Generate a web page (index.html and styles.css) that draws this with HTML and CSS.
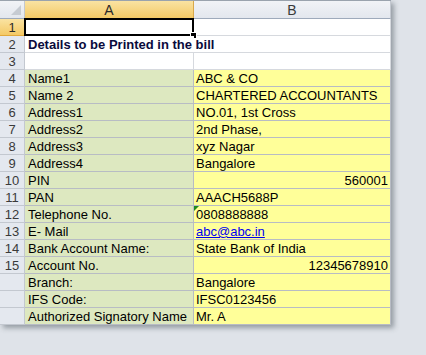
FILE: index.html
```html
<!DOCTYPE html>
<html lang="en">

<head>
    <meta charset="UTF-8">
    <meta name="viewport" content="width=device-width, initial-scale=1.0">
    <title>Bill Details</title>
    <link rel="stylesheet" href="styles.css">
</head>

<body>

    <div class="sheet">
        <!-- column headers -->
        <div class="corner"><span class="corner-mark"></span></div>
        <div class="col-head active">A</div>
        <div class="col-head">B</div>

        <div class="row-head active">1</div>
        <div class="cell blank selected"></div>
        <div class="cell blank"></div>

        <div class="row-head">2</div>
        <div class="cell blank title">Details to be Printed in the bill</div>
        <div class="cell blank spill"></div>

        <div class="row-head">3</div>
        <div class="cell blank"></div>
        <div class="cell blank"></div>

        <div class="row-head">4</div>
        <div class="cell label">Name1</div>
        <div class="cell value">ABC &amp; CO</div>

        <div class="row-head">5</div>
        <div class="cell label">Name 2</div>
        <div class="cell value">CHARTERED ACCOUNTANTS</div>

        <div class="row-head">6</div>
        <div class="cell label">Address1</div>
        <div class="cell value">NO.01, 1st Cross</div>

        <div class="row-head">7</div>
        <div class="cell label">Address2</div>
        <div class="cell value">2nd Phase,</div>

        <div class="row-head">8</div>
        <div class="cell label">Address3</div>
        <div class="cell value">xyz Nagar</div>

        <div class="row-head">9</div>
        <div class="cell label">Address4</div>
        <div class="cell value">Bangalore</div>

        <div class="row-head">10</div>
        <div class="cell label">PIN</div>
        <div class="cell value num">560001</div>

        <div class="row-head">11</div>
        <div class="cell label">PAN</div>
        <div class="cell value">AAACH5688P</div>

        <div class="row-head">12</div>
        <div class="cell label">Telephone No.</div>
        <div class="cell value flagged">0808888888</div>

        <div class="row-head">13</div>
        <div class="cell label">E- Mail</div>
        <div class="cell value"><a class="link" href="#">abc@abc.in</a></div>

        <div class="row-head">14</div>
        <div class="cell label">Bank Account Name:</div>
        <div class="cell value">State Bank of India</div>

        <div class="row-head">15</div>
        <div class="cell label">Account No.</div>
        <div class="cell value num">12345678910</div>

        <div class="row-head"></div>
        <div class="cell label">Branch:</div>
        <div class="cell value">Bangalore</div>

        <div class="row-head"></div>
        <div class="cell label">IFS Code:</div>
        <div class="cell value">IFSC0123456</div>

        <div class="row-head"></div>
        <div class="cell label">Authorized Signatory Name</div>
        <div class="cell value">Mr. A</div>
    </div>

</body>

</html>
```

FILE: styles.css
```css
body {
    margin: 0;
    background-color: #dfe3e9;
    font-family: "Liberation Sans", Arial, sans-serif;
    font-size: 13px;
    height: 355px;
    overflow: hidden;
}

.sheet {
    display: grid;
    grid-template-columns: 25px 169px 197px;
    grid-template-rows: 18px;
    grid-auto-rows: 17px;
    width: 391px;
    background-color: #fff;
    box-shadow: 3px 3px 5px rgba(60, 70, 80, 0.45);
    border-top: 1px solid #9aa3ad;
    box-sizing: border-box;
}

/* header strip */
.corner,
.col-head,
.row-head {
    background: linear-gradient(#f1f3f6, #e3e7ee);
    color: #3a3a3a;
    box-sizing: border-box;
    border-right: 1px solid #c3c8d0;
    border-bottom: 1px solid #c3c8d0;
    display: flex;
    align-items: center;
    justify-content: center;
}

.corner {
    position: relative;
    border-bottom-color: #9eaabb;
}

.corner-mark {
    position: absolute;
    right: 3px;
    bottom: 3px;
    width: 0;
    height: 0;
    border-left: 10px solid transparent;
    border-bottom: 10px solid #c6cbd2;
}

.col-head {
    font-size: 14px;
    border-bottom-color: #9eaabb;
}

.row-head {
    background: #e4e8ef;
    font-size: 13px;
    padding-top: 1px;
}

.col-head.active,
.row-head.active {
    background: linear-gradient(#fae3a2, #f4c965);
    border-right-color: #d8a84a;
    border-bottom-color: #e2a93b;
    color: #2a2a2a;
}

/* data cells */
.cell {
    box-sizing: border-box;
    border-right: 1px solid #c6cbd2;
    border-bottom: 1px solid #c6cbd2;
    padding: 1px 2px 0 3px;
    white-space: nowrap;
    line-height: 15px;
    color: #000;
}

.blank {
    background-color: #fff;
    border-bottom-color: #d6d9de;
    border-right-color: #d6d9de;
}

.title {
    font-weight: bold;
    color: #0a0a3c;
    overflow: visible;
    border-right: none;
    position: relative;
    z-index: 1;
}

/* neighbour lets the heading run across it */
.spill {
    background-color: transparent;
}

.label {
    background-color: #dde8c0;
    border-bottom-color: #b8bcc4;
    border-right-color: #b8bcc4;
}

.value {
    background-color: #ffff99;
    border-bottom-color: #b8bcc4;
    border-right-color: #b8bcc4;
    padding-left: 2px;
}

.num {
    text-align: right;
    padding-right: 2px;
}

.link {
    color: #0000ee;
    text-decoration: underline;
}

/* active cell frame and fill handle */
.selected {
    position: relative;
}

.selected::before {
    content: "";
    position: absolute;
    left: -1px;
    top: -1px;
    right: -1px;
    bottom: -1px;
    border: 2px solid #000;
}

.selected::after {
    content: "";
    position: absolute;
    right: -4px;
    bottom: -4px;
    width: 5px;
    height: 5px;
    background-color: #000;
    border: 1px solid #fff;
}

/* green error marker on number-as-text */
.flagged {
    position: relative;
}

.flagged::before {
    content: "";
    position: absolute;
    left: 0;
    top: 0;
    border-top: 5px solid #1e8a1e;
    border-right: 5px solid transparent;
}
```
